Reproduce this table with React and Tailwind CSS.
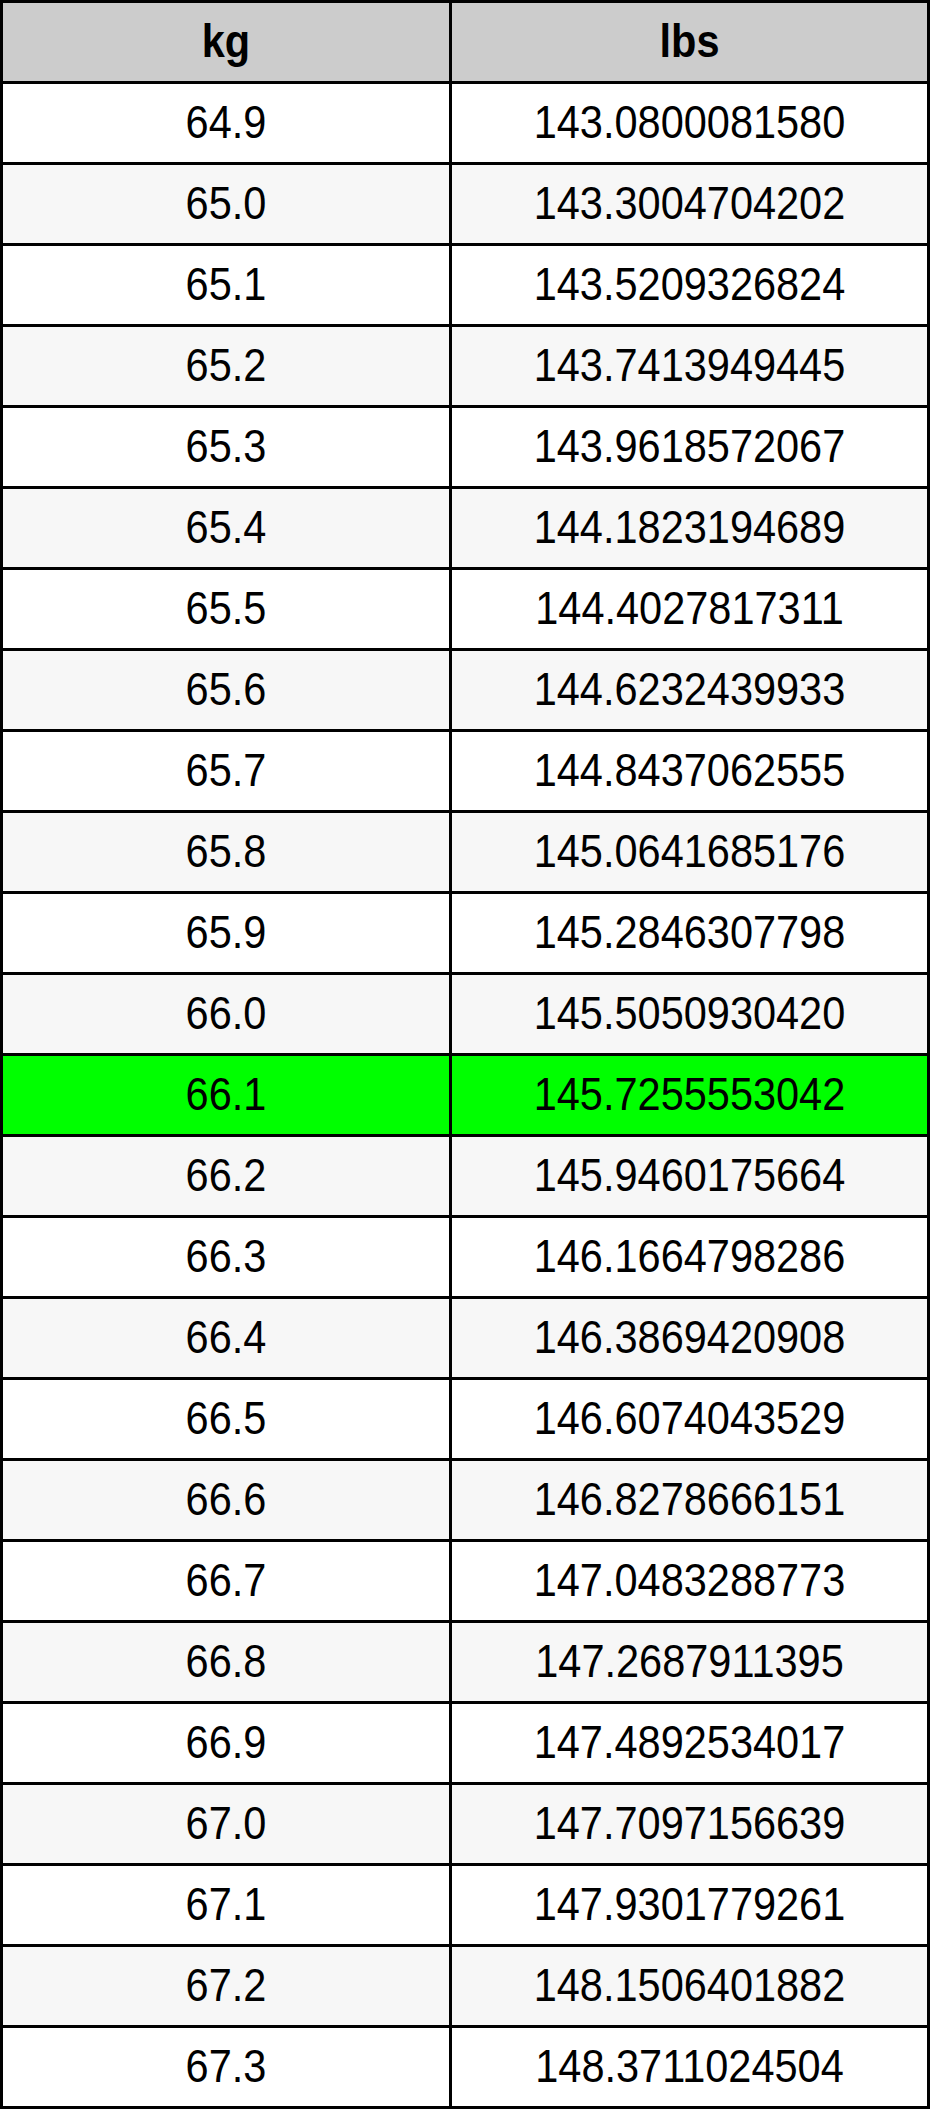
const rows = [
  ["64.9", "143.0800081580"],
  ["65.0", "143.3004704202"],
  ["65.1", "143.5209326824"],
  ["65.2", "143.7413949445"],
  ["65.3", "143.9618572067"],
  ["65.4", "144.1823194689"],
  ["65.5", "144.4027817311"],
  ["65.6", "144.6232439933"],
  ["65.7", "144.8437062555"],
  ["65.8", "145.0641685176"],
  ["65.9", "145.2846307798"],
  ["66.0", "145.5050930420"],
  ["66.1", "145.7255553042"],
  ["66.2", "145.9460175664"],
  ["66.3", "146.1664798286"],
  ["66.4", "146.3869420908"],
  ["66.5", "146.6074043529"],
  ["66.6", "146.8278666151"],
  ["66.7", "147.0483288773"],
  ["66.8", "147.2687911395"],
  ["66.9", "147.4892534017"],
  ["67.0", "147.7097156639"],
  ["67.1", "147.9301779261"],
  ["67.2", "148.1506401882"],
  ["67.3", "148.3711024504"],
];

const Cell = ({ bg, bold, children }) => (
  <div className={`${bg} flex items-center justify-center h-[78px]`}>
    <span className={`inline-block scale-y-110 text-[41.5px] leading-none text-black ${bold ? "font-bold" : ""}`}>
      {children}
    </span>
  </div>
);

const App = () => {
  return (
    <div className="w-[930px] bg-white" style={{ fontFamily: '"Liberation Sans", Arial, sans-serif' }}>
      <div className="grid grid-cols-[446px_475px] gap-[3px] bg-black p-[3px]">
        <Cell bg="bg-[#cccccc]" bold>kg</Cell>
        <Cell bg="bg-[#cccccc]" bold>lbs</Cell>
        {rows.map(([kg, lbs], i) => {
          const bg = kg === "66.1" ? "bg-[#00ff00]" : i % 2 === 0 ? "bg-white" : "bg-[#f7f7f7]";
          return [
            <Cell key={kg + "a"} bg={bg}>{kg}</Cell>,
            <Cell key={kg + "b"} bg={bg}>{lbs}</Cell>,
          ];
        })}
      </div>
    </div>
  );
};

export default App;
